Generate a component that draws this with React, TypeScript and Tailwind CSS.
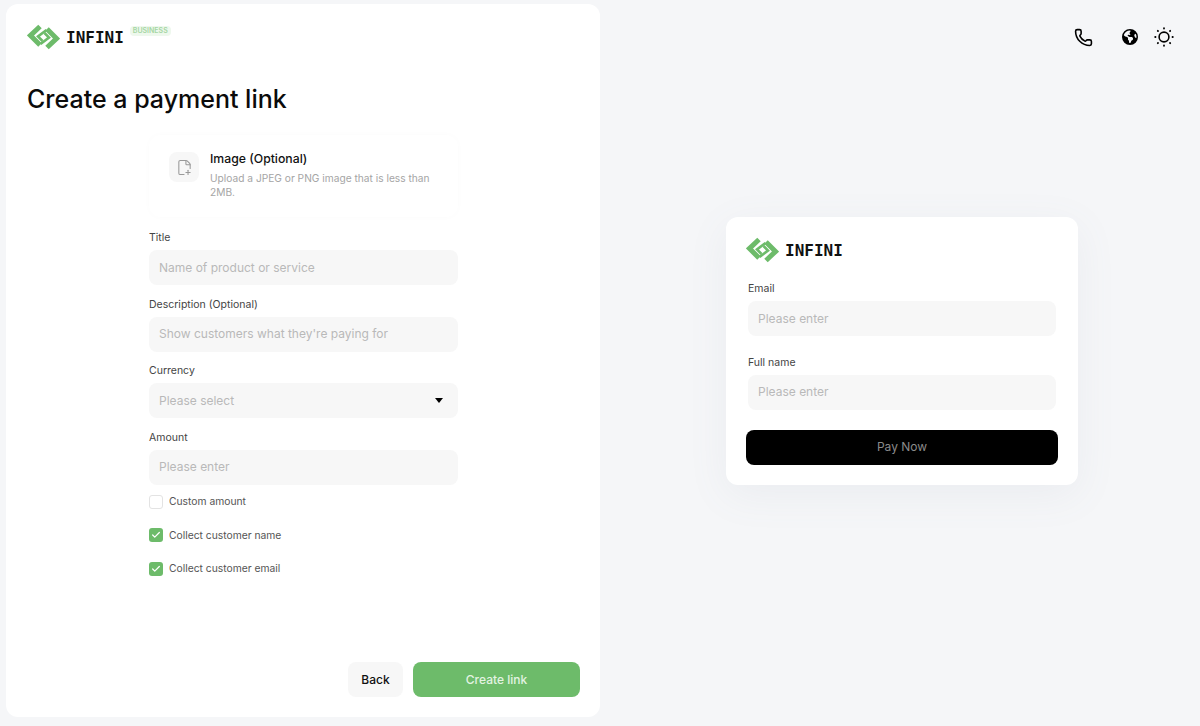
import { Phone, FilePlus2, Check } from "lucide-react";
import { FaEarthAmericas } from "react-icons/fa6";

const FONT = "font-['Inter',sans-serif]";

function Logo() {
  return (
    <div className="flex items-center gap-1.5">
      <svg width="33" height="26" viewBox="0 0 33 26" fill="none" stroke="#6dbb6a" strokeLinejoin="miter">
        <path d="M13 2.5 L3.5 11.5 L13 21" strokeWidth="5" />
        <path d="M20 23.5 L29.5 14.5 L20 5" strokeWidth="5" />
        <path d="M19.5 6 L11 12.5 L15.5 17" strokeWidth="2.6" />
        <path d="M13.5 20 L22 13.5 L17.5 9" strokeWidth="2.6" />
      </svg>
      <span className="pt-0.5 font-['DejaVu_Sans_Mono',monospace] text-[16px] leading-none font-bold text-[#111]">INFINI</span>
    </div>
  );
}

function Field({ label, placeholder, select }: { label: string; placeholder: string; select?: boolean }) {
  return (
    <div className="flex flex-col gap-[5px]">
      <label className="text-[10.5px] leading-[14px] text-[#444]">{label}</label>
      <div className="flex h-[35px] items-center justify-between rounded-lg bg-[#f7f7f7] pr-[15px] pl-[10px]">
        <span className="text-[12px] text-[#b9b9b9]">{placeholder}</span>
        {select && <span className="h-0 w-0 border-x-4 border-t-[5px] border-x-transparent border-t-black" />}
      </div>
    </div>
  );
}

function CheckRow({ label, checked }: { label: string; checked?: boolean }) {
  return (
    <div className="flex h-[14px] items-center gap-1.5">
      {checked ? (
        <span className="flex h-[14px] w-[14px] items-center justify-center rounded-[3px] bg-[#6dbb6a]">
          <Check size={10} strokeWidth={3} className="text-white" />
        </span>
      ) : (
        <span className="h-[14px] w-[14px] rounded-[3px] border border-[#e3e3e3] bg-white" />
      )}
      <span className="text-[10.3px] text-[#555]">{label}</span>
    </div>
  );
}

function SunDots() {
  return (
    <svg width="22" height="22" viewBox="0 0 22 22" fill="none" stroke="black">
      <circle cx="11" cy="11" r="4.9" strokeWidth="1.6" />
      <g strokeWidth="1.8" strokeLinecap="round">
        <path d="M11 2.2v.3M11 19.5v.3M2.2 11h.3M19.5 11h.3M4.8 4.8l.2.2M17 17l.2.2M4.8 17.2l.2-.2M17 5l.2-.2" />
      </g>
    </svg>
  );
}

export default function App() {
  return (
    <div className={`flex h-[726px] w-[1200px] overflow-hidden bg-[#f5f6f8] pt-1 pb-[9px] pl-1.5 ${FONT}`}>
      {/* left panel */}
      <div className="flex w-[594px] flex-col rounded-xl bg-white pt-5 pr-5 pb-5 pl-[21px]">
        <div className="flex items-start">
          <Logo />
          <span className="mt-[2px] ml-1.5 rounded bg-[#eef8ed] px-[3px] py-[1px] text-[7px] leading-[8px] font-semibold text-[#a5d6a3]">BUSINESS</span>
        </div>
        <h1 className="mt-[32px] text-[25px] leading-[34px] font-medium text-[#0b0b0b]">Create a payment link</h1>

        <div className="mt-[19px] ml-[122px] flex w-[309px] flex-col">
          <div className="flex gap-[11px] rounded-xl px-[20px] pt-4 pb-[18px] shadow-[0_0_6px_rgba(0,0,0,0.02)]">
            <div className="mt-[1px] flex h-[30px] w-[30px] shrink-0 items-center justify-center rounded-lg bg-[#f7f7f7]">
              <FilePlus2 size={17} strokeWidth={1.5} className="text-[#999]" />
            </div>
            <div className="flex flex-col gap-1">
              <span className="text-[12.25px] leading-[16px] font-medium text-[#111]">Image (Optional)</span>
              <span className="text-[10.2px] leading-[14px] text-[#a5a5a5]">Upload a JPEG or PNG image that is less than 2MB.</span>
            </div>
          </div>
          <div className="mt-[14px] flex flex-col gap-[12.67px]">
            <Field label="Title" placeholder="Name of product or service" />
            <Field label="Description (Optional)" placeholder="Show customers what they're paying for" />
            <Field label="Currency" placeholder="Please select" select />
            <Field label="Amount" placeholder="Please enter" />
          </div>
          <div className="mt-[10px] flex flex-col gap-[19.5px]">
            <CheckRow label="Custom amount" />
            <CheckRow label="Collect customer name" checked />
            <CheckRow label="Collect customer email" checked />
          </div>
        </div>

        <div className="mt-auto flex justify-end gap-[10px]">
          <button className="h-[35px] w-[55px] rounded-lg bg-[#f7f7f7] text-[12px] font-medium text-[#111]">Back</button>
          <button className="h-[35px] w-[167px] rounded-lg bg-[#6dbb6a] text-[12px] font-medium text-[#e3f3e2]">Create link</button>
        </div>
      </div>

      {/* right side */}
      <div className="flex flex-1 flex-col">
        <div className="mt-[22px] flex h-[22px] items-center justify-end pr-[25px]">
          <Phone size={19} strokeWidth={2} className="text-black" />
          <FaEarthAmericas size={16} className="ml-[29px] text-black" />
          <span className="ml-[15px]">
            <SunDots />
          </span>
        </div>
        <div className="mt-[169px] ml-[126px] flex h-[268px] w-[352px] flex-col rounded-xl bg-white px-5 pt-5 shadow-[0_10px_40px_rgba(120,130,150,0.08)]">
          <Logo />
          <div className="mt-[19px] flex flex-col gap-[19.5px] px-[2px]">
            <Field label="Email" placeholder="Please enter" />
            <Field label="Full name" placeholder="Please enter" />
          </div>
          <button className="mt-5 h-[35px] rounded-lg bg-black text-[12px] text-[#8a8a8a]">Pay Now</button>
        </div>
      </div>
    </div>
  );
}
